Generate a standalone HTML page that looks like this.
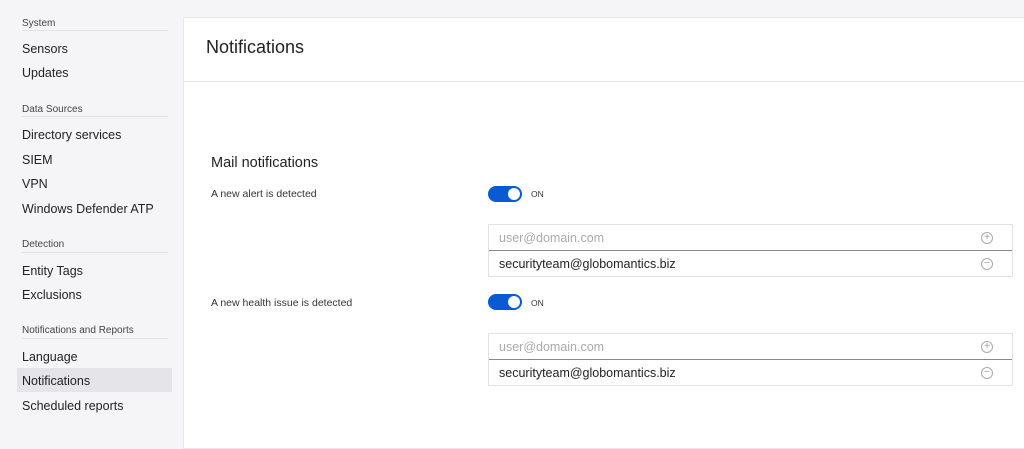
<!DOCTYPE html>
<html><head><style>
body{margin:0;width:1024px;height:435px;background:#f5f5f7;font-family:"Liberation Sans",sans-serif;color:#222;position:relative;overflow:hidden}
.a{position:absolute;white-space:nowrap}
.h{font-size:10px;color:#444;left:22px}
.hl{position:absolute;left:22px;width:146px;height:1px;background:#e3e3e6}
.i{font-size:12.5px;color:#222;left:22px}
.card{position:absolute;left:183px;top:17px;width:860px;height:430px;background:#fff;border:1px solid #e8e8ea}
.lbl{font-size:10.5px;color:#333}
.tog{position:absolute;width:34px;height:16px;border-radius:8px;background:#0a5ad4}
.tog:after{content:"";position:absolute;right:2px;top:2px;width:12px;height:12px;border-radius:50%;background:#fff}
.on{font-size:8.5px;color:#333}
.box{position:absolute;left:488px;width:525px;height:53px;border:1px solid #e2e2e4;box-sizing:border-box}
.box .sep{position:absolute;left:0;right:0;top:25px;height:1px;background:#888}
.box .t1{position:absolute;left:10px;top:6px;font-size:12.5px;color:#aaa}
.box .t2{position:absolute;left:10px;top:32px;font-size:12.5px;color:#222}
.ic{position:absolute;right:19px;width:10px;height:10px;border:1px solid #aaa;border-radius:50%;font-size:10px;line-height:10px;text-align:center;color:#999}
</style></head><body>
<div class="a h" style="top:18px">System</div><div class="hl" style="top:30px"></div>
<div class="a i" style="top:42px">Sensors</div>
<div class="a i" style="top:66px">Updates</div>
<div class="a h" style="top:104px">Data Sources</div><div class="hl" style="top:116px"></div>
<div class="a i" style="top:128px">Directory services</div>
<div class="a i" style="top:153px">SIEM</div>
<div class="a i" style="top:177px">VPN</div>
<div class="a i" style="top:202px">Windows Defender ATP</div>
<div class="a h" style="top:239px">Detection</div><div class="hl" style="top:252px"></div>
<div class="a i" style="top:264px">Entity Tags</div>
<div class="a i" style="top:288px">Exclusions</div>
<div class="a h" style="top:325px">Notifications and Reports</div><div class="hl" style="top:338px"></div>
<div class="a i" style="top:350px">Language</div>
<div style="position:absolute;left:17px;top:368px;width:155px;height:24px;background:#e5e5e9"></div>
<div class="a i" style="top:374px">Notifications</div>
<div class="a i" style="top:399px">Scheduled reports</div>
<div class="card"></div>
<div style="position:absolute;left:184px;top:81px;width:840px;height:1px;background:#e6e6e8"></div>
<div class="a" style="left:206px;top:37px;font-size:18px;color:#222">Notifications</div>
<div class="a" style="left:211px;top:155px;font-size:14.5px;color:#222">Mail notifications</div>
<div class="a lbl" style="left:211px;top:188px">A new alert is detected</div>
<div class="tog" style="left:488px;top:186px"></div><div class="a on" style="left:531px;top:189px">ON</div>
<div class="box" style="top:224px"><div class="sep"></div><div class="t1">user@domain.com</div><div class="t2">securityteam@globomantics.biz</div><div class="ic" style="top:7px">+</div><div class="ic" style="top:33px">−</div></div>
<div class="a lbl" style="left:211px;top:297px">A new health issue is detected</div>
<div class="tog" style="left:488px;top:294px"></div><div class="a on" style="left:531px;top:298px">ON</div>
<div class="box" style="top:333px"><div class="sep"></div><div class="t1">user@domain.com</div><div class="t2">securityteam@globomantics.biz</div><div class="ic" style="top:7px">+</div><div class="ic" style="top:33px">−</div></div>
</body></html>
